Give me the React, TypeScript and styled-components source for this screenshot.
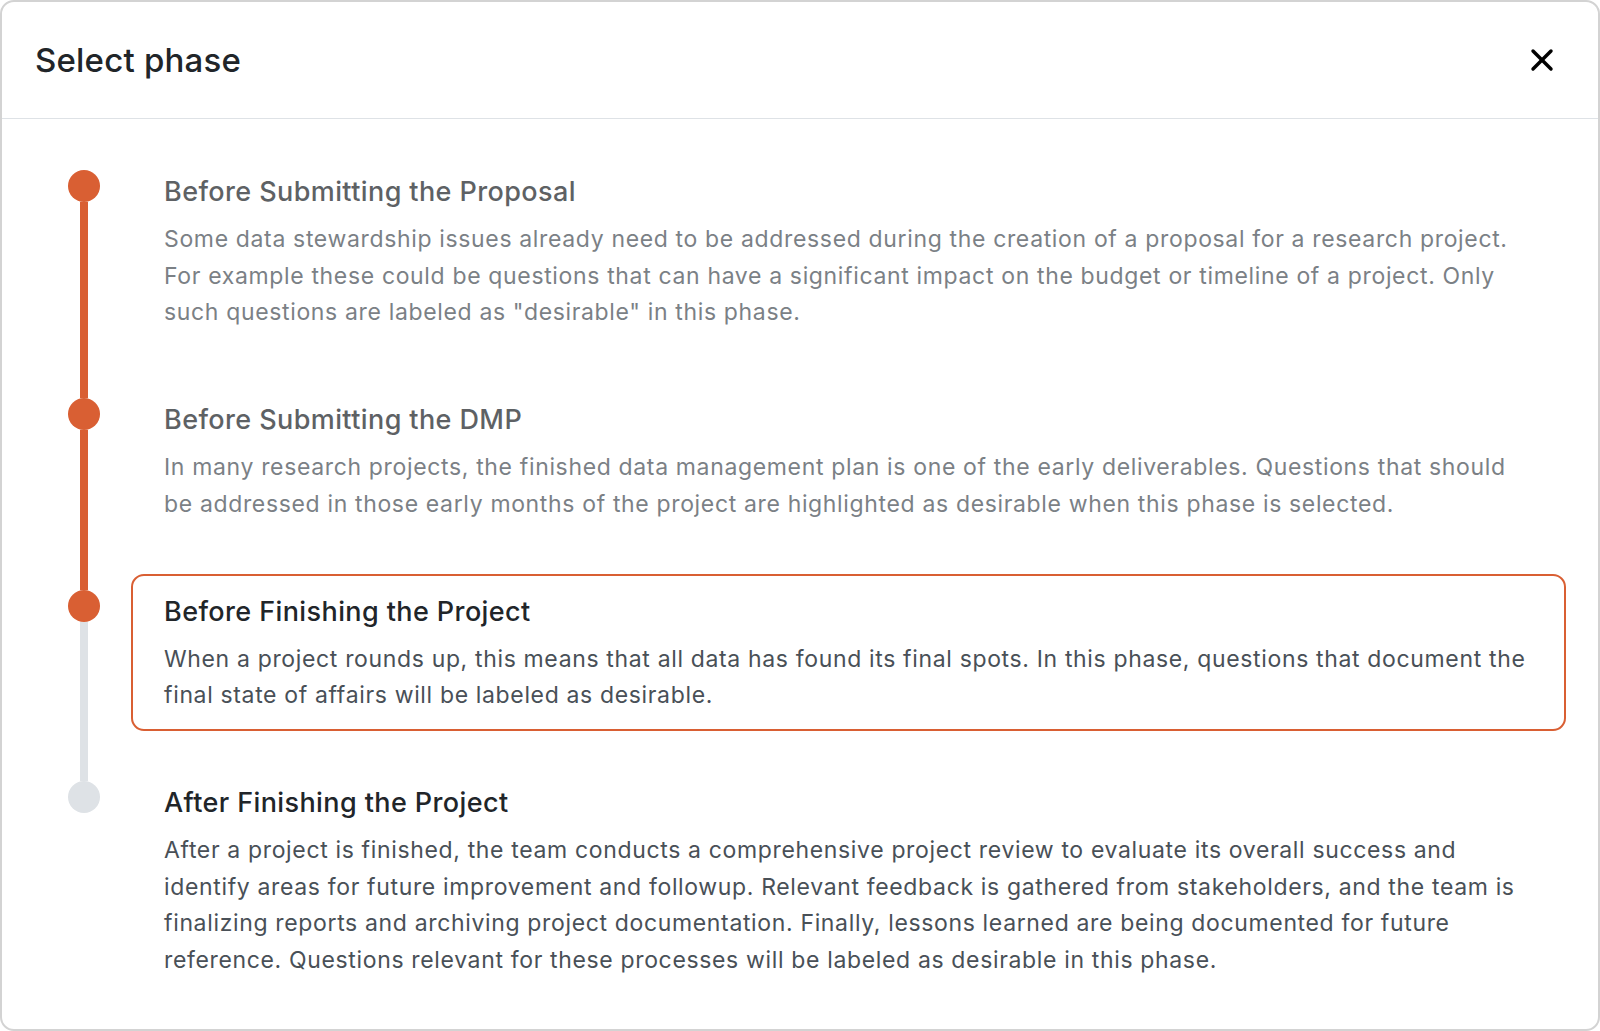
import styled, { createGlobalStyle } from "styled-components";
import { X } from "lucide-react";

type Phase = {
  title: string;
  description: string;
};

const phases: Phase[] = [
  {
    title: "Before Submitting the Proposal",
    description:
      'Some data stewardship issues already need to be addressed during the creation of a proposal for a research project. For example these could be questions that can have a significant impact on the budget or timeline of a project. Only such questions are labeled as "desirable" in this phase.',
  },
  {
    title: "Before Submitting the DMP",
    description:
      "In many research projects, the finished data management plan is one of the early deliverables. Questions that should be addressed in those early months of the project are highlighted as desirable when this phase is selected.",
  },
  {
    title: "Before Finishing the Project",
    description:
      "When a project rounds up, this means that all data has found its final spots. In this phase, questions that document the final state of affairs will be labeled as desirable.",
  },
  {
    title: "After Finishing the Project",
    description:
      "After a project is finished, the team conducts a comprehensive project review to evaluate its overall success and identify areas for future improvement and followup. Relevant feedback is gathered from stakeholders, and the team is finalizing reports and archiving project documentation. Finally, lessons learned are being documented for future reference. Questions relevant for these processes will be labeled as desirable in this phase.",
  },
];

// index of the phase that is currently selected
const selected = 2;

const App = () => {
  return (
    <>
      <GlobalStyle />
      <Modal>
        <Header>
          <Title>Select phase</Title>
          <CloseButton aria-label="Close">
            <X size={36} strokeWidth={2.3} />
          </CloseButton>
        </Header>
        <Body>
          {phases.map((phase, i) => {
            const reached = i <= selected;
            return (
              <Row key={phase.title}>
                <Track>
                  <Segment $color={i === 0 ? "transparent" : reached ? ORANGE : GRAY} $grow={false} />
                  <Dot $done={reached} />
                  <Segment
                    $color={i === phases.length - 1 ? "transparent" : i + 1 <= selected ? ORANGE : GRAY}
                    $grow
                  />
                </Track>
                <Cell $last={i === phases.length - 1}>
                  <Card $active={i === selected} $past={i < selected}>
                    <PhaseTitle>{phase.title}</PhaseTitle>
                    <PhaseText>{phase.description}</PhaseText>
                  </Card>
                </Cell>
              </Row>
            );
          })}
        </Body>
      </Modal>
    </>
  );
};
export default App;

const ORANGE = "#d95f33";
const GRAY = "#dee2e6";

const GlobalStyle = createGlobalStyle`
  * {
    box-sizing: border-box;
  }
  body {
    margin: 0;
    background: #ffffff;
    font-family: Inter, "Noto Sans", sans-serif;
    -webkit-font-smoothing: antialiased;
  }
`;

const Modal = styled.div`
  width: 100%;
  min-height: 1031px;
  border: 2px solid #d3d3d3;
  border-radius: 14px;
  background: #fff;
  overflow: hidden;
`;

const Header = styled.div`
  height: 117px;
  display: flex;
  align-items: center;
  justify-content: space-between;
  padding: 0 38px 0 33px;
  border-bottom: 1px solid #dee2e6;
`;

const Title = styled.h2`
  margin: 0;
  font-size: 33px;
  font-weight: 500;
  color: #212529;
  letter-spacing: 0.2px;
`;

const CloseButton = styled.button`
  border: none;
  background: transparent;
  padding: 0;
  display: flex;
  color: #000;
  cursor: pointer;
`;

const Body = styled.div`
  padding: 35px 32px 28px 32px;
`;

const Row = styled.div`
  display: grid;
  grid-template-columns: 97px 1fr;
`;

const Track = styled.div`
  display: flex;
  flex-direction: column;
  align-items: flex-start;
  padding-left: 34px;
`;

const Segment = styled.div<{ $color: string; $grow: boolean }>`
  width: 8px;
  margin-left: 12px;
  height: 16px;
  flex: ${(p) => (p.$grow ? "1" : "none")};
  background: ${(p) => p.$color};
`;

const Dot = styled.div<{ $done: boolean }>`
  width: 32px;
  height: 32px;
  border-radius: 50%;
  background: ${(p) => (p.$done ? ORANGE : GRAY)};
`;

const Cell = styled.div<{ $last: boolean }>`
  padding-bottom: ${(p) => (p.$last ? "0" : "34px")};
`;

const Card = styled.div<{ $active: boolean; $past: boolean }>`
  border: 2px solid ${(p) => (p.$active ? ORANGE : "transparent")};
  border-radius: 13px;
  padding: 18px 26px 15px 31px;
  opacity: ${(p) => (p.$past ? 0.72 : 1)};
`;

const PhaseTitle = styled.div`
  font-size: 27px;
  line-height: 36px;
  font-weight: 500;
  color: #212529;
  letter-spacing: 0.4px;
  margin-bottom: 11px;
`;

const PhaseText = styled.div`
  font-size: 23px;
  line-height: 36.7px;
  letter-spacing: 0.65px;
  color: #495057;
`;
